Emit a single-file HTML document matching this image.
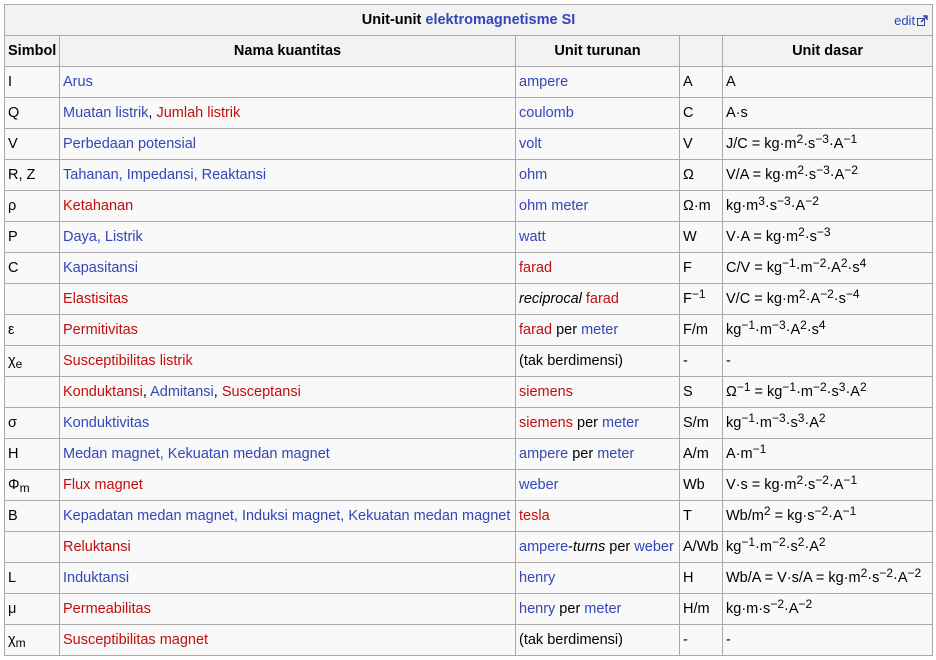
<!DOCTYPE html>
<html><head><meta charset="utf-8"><style>
body{margin:0;background:#fff;font-family:"Liberation Sans",Arial,sans-serif;font-size:14.5px;color:#000}
table{position:absolute;left:4px;top:4px;border-collapse:collapse;table-layout:fixed;width:928px;background:#f9f9f9}
td,th{border:1px solid #aaa;padding:0 3px;height:30px;white-space:nowrap;overflow:hidden}
th{background:#f2f2f2;font-weight:bold;text-align:center}
tr{height:31px}
.b{color:#3346b8}.r{color:#c20d0d}
sup{font-size:12px;line-height:0;vertical-align:5px}
sub{font-size:12px;line-height:0;vertical-align:-3px}
.ed{position:absolute;right:4px;top:8px;font-weight:normal;font-size:13px;color:#3346b8}
</style></head><body>
<table>
<colgroup><col style="width:55px"><col style="width:456px"><col style="width:164px"><col style="width:43px"><col style="width:210px"></colgroup>
<tr><th colspan="5" style="position:relative">Unit-unit <span class="b">elektromagnetisme SI</span><span class="ed">edit<svg width="11" height="11" viewBox="0 0 11 11" style="margin-left:2px;vertical-align:-1px"><rect x="0.5" y="3.5" width="7" height="7" fill="none" stroke="#3346b8"/><path d="M4 7L10 1M6 1H10V5" fill="none" stroke="#3346b8" stroke-width="1.5"/></svg></span></th></tr>
<tr><th>Simbol</th><th>Nama kuantitas</th><th>Unit turunan</th><th></th><th>Unit dasar</th></tr>
<tr><td>I</td><td class="b">Arus</td><td class="b">ampere</td><td>A</td><td>A</td></tr>
<tr><td>Q</td><td><span class="b">Muatan listrik</span>, <span class="r">Jumlah listrik</span></td><td class="b">coulomb</td><td>C</td><td>A·s</td></tr>
<tr><td>V</td><td class="b">Perbedaan potensial</td><td class="b">volt</td><td>V</td><td>J/C = kg·m<sup>2</sup>·s<sup>−3</sup>·A<sup>−1</sup></td></tr>
<tr><td>R, Z</td><td class="b">Tahanan, Impedansi, Reaktansi</td><td class="b">ohm</td><td>Ω</td><td>V/A = kg·m<sup>2</sup>·s<sup>−3</sup>·A<sup>−2</sup></td></tr>
<tr><td>ρ</td><td class="r">Ketahanan</td><td class="b">ohm meter</td><td>Ω·m</td><td>kg·m<sup>3</sup>·s<sup>−3</sup>·A<sup>−2</sup></td></tr>
<tr><td>P</td><td class="b">Daya, Listrik</td><td class="b">watt</td><td>W</td><td>V·A = kg·m<sup>2</sup>·s<sup>−3</sup></td></tr>
<tr><td>C</td><td class="b">Kapasitansi</td><td class="r">farad</td><td>F</td><td>C/V = kg<sup>−1</sup>·m<sup>−2</sup>·A<sup>2</sup>·s<sup>4</sup></td></tr>
<tr><td></td><td class="r">Elastisitas</td><td><i>reciprocal</i> <span class="r">farad</span></td><td>F<sup>−1</sup></td><td>V/C = kg·m<sup>2</sup>·A<sup>−2</sup>·s<sup>−4</sup></td></tr>
<tr><td>ε</td><td class="r">Permitivitas</td><td><span class="r">farad</span> per <span class="b">meter</span></td><td>F/m</td><td>kg<sup>−1</sup>·m<sup>−3</sup>·A<sup>2</sup>·s<sup>4</sup></td></tr>
<tr><td>χ<sub>e</sub></td><td class="r">Susceptibilitas listrik</td><td>(tak berdimensi)</td><td>-</td><td>-</td></tr>
<tr><td></td><td><span class="r">Konduktansi</span>, <span class="b">Admitansi</span>, <span class="r">Susceptansi</span></td><td class="r">siemens</td><td>S</td><td>Ω<sup>−1</sup> = kg<sup>−1</sup>·m<sup>−2</sup>·s<sup>3</sup>·A<sup>2</sup></td></tr>
<tr><td>σ</td><td class="b">Konduktivitas</td><td><span class="r">siemens</span> per <span class="b">meter</span></td><td>S/m</td><td>kg<sup>−1</sup>·m<sup>−3</sup>·s<sup>3</sup>·A<sup>2</sup></td></tr>
<tr><td>H</td><td class="b">Medan magnet, Kekuatan medan magnet</td><td><span class="b">ampere</span> per <span class="b">meter</span></td><td>A/m</td><td>A·m<sup>−1</sup></td></tr>
<tr><td>Φ<sub>m</sub></td><td class="r">Flux magnet</td><td class="b">weber</td><td>Wb</td><td>V·s = kg·m<sup>2</sup>·s<sup>−2</sup>·A<sup>−1</sup></td></tr>
<tr><td>B</td><td class="b">Kepadatan medan magnet, Induksi magnet, Kekuatan medan magnet</td><td class="r">tesla</td><td>T</td><td>Wb/m<sup>2</sup> = kg·s<sup>−2</sup>·A<sup>−1</sup></td></tr>
<tr><td></td><td class="r">Reluktansi</td><td><span class="b">ampere</span>-<i>turns</i> per <span class="b">weber</span></td><td>A/Wb</td><td>kg<sup>−1</sup>·m<sup>−2</sup>·s<sup>2</sup>·A<sup>2</sup></td></tr>
<tr><td>L</td><td class="b">Induktansi</td><td class="b">henry</td><td>H</td><td>Wb/A = V·s/A = kg·m<sup>2</sup>·s<sup>−2</sup>·A<sup>−2</sup></td></tr>
<tr><td>μ</td><td class="r">Permeabilitas</td><td><span class="b">henry</span> per <span class="b">meter</span></td><td>H/m</td><td>kg·m·s<sup>−2</sup>·A<sup>−2</sup></td></tr>
<tr><td>χ<sub>m</sub></td><td class="r">Susceptibilitas magnet</td><td>(tak berdimensi)</td><td>-</td><td>-</td></tr>
</table>
</body></html>
